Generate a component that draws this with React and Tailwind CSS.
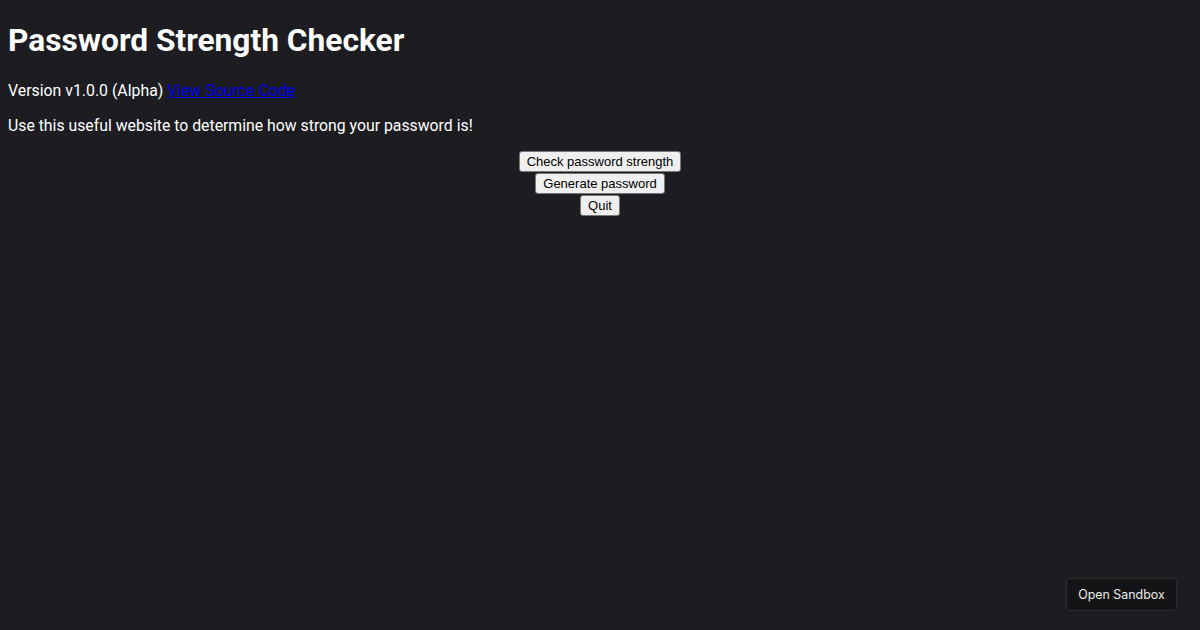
import React from 'react';

const App = () => {
  const buttons = ['Check password strength', 'Generate password', 'Quit'];

  return (
    <div className="relative min-h-[630px] bg-[#1c1c21] px-2 pt-[22px] text-white font-['Roboto',sans-serif]">
      <h1 className="text-[31.7px] font-bold leading-[37.5px]">Password Strength Checker</h1>

      <p className="mt-[21px] text-[15.85px] leading-[19px]">
        Version v1.0.0 (Alpha){' '}
        <a href="#" className="text-[#0000ee] underline">View Source Code</a>
      </p>
      <p className="mt-4 text-[15.8px] leading-[19px]">
        Use this useful website to determine how strong your password is!
      </p>

      <div className="mt-4 flex flex-col items-center gap-px">
        {buttons.map((label) => (
          <button
            key={label}
            className="h-[21px] rounded-[3px] border border-[#767676] bg-[#efefef] px-[7px] text-[13px] leading-[19px] text-black font-['Liberation_Sans',Arial,sans-serif]"
          >
            {label}
          </button>
        ))}
      </div>

      {/* sandbox badge floats over the page */}
      <button className="absolute bottom-[19px] right-[23px] h-[33px] w-[111px] rounded-[4px] border border-[#2d2d30] bg-[#141416] pt-[2px] text-[12.4px] text-[#ececec] font-['Inter',sans-serif]">
        Open Sandbox
      </button>
    </div>
  );
};

export default App;
